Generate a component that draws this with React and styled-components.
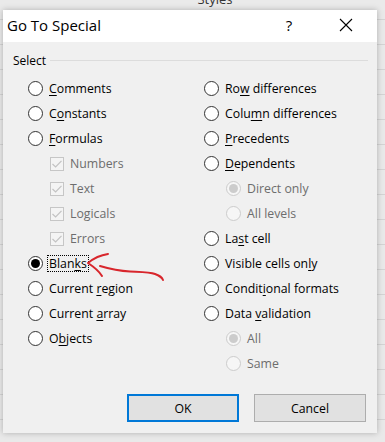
import React from "react"
import styled, { createGlobalStyle } from "styled-components"

const GlobalStyle = createGlobalStyle`
    html, body {
        margin: 0;
        padding: 0;
        background: #e6e6e6;
    }
    body {
        font-family: "Open Sans", "Noto Sans", sans-serif;
    }
`

const Backdrop = styled.div`
    width: 385px;
    height: 442px;
    overflow: hidden;
    background-color: #e9e9e9;
    background-image: repeating-linear-gradient(
        to bottom,
        transparent 0,
        transparent 24px,
        #d4d4d4 24px,
        #d4d4d4 25px
    );
    background-position: 0 -5px;
    display: flex;
    flex-direction: column;
`

const TopStrip = styled.div`
    height: 10px;
    overflow: hidden;
    display: flex;
    justify-content: center;
    background: #eaeaea;

    span {
        font-size: 13px;
        line-height: 13px;
        margin-top: -7px;
        padding-left: 45px;
        color: #333;
    }
`

const DialogRow = styled.div`
    display: flex;
    padding-left: 3px;
`

const Dialog = styled.div`
    position: relative;
    width: 374px;
    height: 423px;
    background: #f0f0f0;
    box-shadow: 0 0 6px rgba(0, 0, 0, 0.25);
    display: flex;
    flex-direction: column;
`

const TitleBar = styled.div`
    height: 32px;
    background: #fff;
    display: flex;
    align-items: center;
    padding-left: 4px;

    .Title {
        flex: 1;
        font-size: 15px;
        color: #000;
        margin-top: -2px;
    }

    .Help {
        width: 24px;
        text-align: center;
        font-size: 15px;
        margin-right: 37px;
        margin-top: -2px;
    }

    .Close {
        width: 16px;
        height: 16px;
        margin-right: 23px;
        margin-top: -3px;
    }
`

const Body = styled.div`
    flex: 1;
    display: flex;
    flex-direction: column;
    padding: 9px 9px 0 10px;
`

const GroupHeader = styled.div`
    display: flex;
    align-items: center;
    height: 18px;
    column-gap: 4px;
    font-size: 12px;

    &::after {
        content: "";
        flex: 1;
        height: 1px;
        background: #dcdcdc;
    }
`

const Columns = styled.div`
    display: grid;
    grid-template-columns: 176px 1fr;
    padding: 7px 0 0 15px;
`

const Column = styled.div`
    display: flex;
    flex-direction: column;
`

const OptionRow = styled.div`
    height: 25px;
    display: flex;
    align-items: center;
    column-gap: 5px;
    padding-left: ${props => props.$indent ? "22px" : "0"};
    font-size: 12.3px;
    color: ${props => props.$disabled ? "#6d6d6d" : "#000"};
`

const RadioMark = styled.span`
    width: 15px;
    height: 15px;
    box-sizing: border-box;
    border-radius: 50%;
    border: 1px solid ${props => props.$disabled ? "#cccccc" : "#333"};
    background: ${props => props.$disabled ? "#f6f6f6" : "#fff"};
    display: flex;
    align-items: center;
    justify-content: center;
    flex-shrink: 0;

    &::after {
        content: "";
        width: 9px;
        height: 9px;
        border-radius: 50%;
        background: ${props => props.$disabled ? "#cccccc" : "#000"};
        display: ${props => props.$checked ? "block" : "none"};
    }
`

const CheckMark = styled.span`
    width: 14px;
    height: 14px;
    box-sizing: border-box;
    border: 1px solid #c6c6c6;
    background: #f4f4f4;
    display: flex;
    align-items: center;
    justify-content: center;
    flex-shrink: 0;

    svg {
        width: 12px;
        height: 12px;
    }
`

const Label = styled.span`
    padding: 0 1px;
    line-height: 15px;
    outline: ${props => props.$focused ? "1px dotted #000" : "none"};
    white-space: nowrap;

    u {
        text-decoration: underline;
        text-underline-offset: 2px;
    }
`

const ButtonBar = styled.div`
    display: flex;
    justify-content: flex-end;
    column-gap: 15px;
    padding: 0 2px 11px 0;
`

const Button = styled.button`
    width: 112px;
    height: 28px;
    box-sizing: border-box;
    font-family: inherit;
    font-size: 12.3px;
    color: #000;
    background: #e1e1e1;
    border: ${props => props.$primary ? "2px solid #0078d7" : "1px solid #adadad"};
    padding: 0;
`

const Annotation = styled.svg`
    position: absolute;
    left: 77px;
    top: 240px;
    pointer-events: none;
`

const Option = ({ label, accel, type = "radio", checked, disabled, indent, focused }) => {
    const i = accel === undefined ? -1 : accel
    const text = i < 0 ? label : (
        <>
            {label.slice(0, i)}<u>{label[i]}</u>{label.slice(i + 1)}
        </>
    )
    return (
        <OptionRow $indent={indent} $disabled={disabled}>
            {type === "radio" ? (
                <RadioMark $checked={checked} $disabled={disabled}/>
            ) : (
                <CheckMark>
                    <svg viewBox="0 0 12 12">
                        <path d="M1.5 6 L4.6 9 L10.5 2.8" fill="none" stroke="#c2c2c2" strokeWidth="1.2"/>
                    </svg>
                </CheckMark>
            )}
            <Label $focused={focused}>{text}</Label>
        </OptionRow>
    )
}

const App = () => {
    return (
        <Backdrop>
            <GlobalStyle/>
            <TopStrip><span>Styles</span></TopStrip>
            <DialogRow>
                <Dialog>
                    <TitleBar>
                        <span className="Title">Go To Special</span>
                        <span className="Help">?</span>
                        <svg className="Close" viewBox="0 0 16 16">
                            <path d="M2 2 L14 14 M14 2 L2 14" stroke="#000" strokeWidth="1.1"/>
                        </svg>
                    </TitleBar>
                    <Body>
                        <GroupHeader>Select</GroupHeader>
                        <Columns>
                            <Column>
                                <Option label="Comments" accel={0}/>
                                <Option label="Constants" accel={1}/>
                                <Option label="Formulas" accel={0}/>
                                <Option label="Numbers" type="check" disabled indent/>
                                <Option label="Text" type="check" disabled indent/>
                                <Option label="Logicals" type="check" disabled indent/>
                                <Option label="Errors" type="check" disabled indent/>
                                <Option label="Blanks" accel={4} checked focused/>
                                <Option label="Current region" accel={8}/>
                                <Option label="Current array" accel={8}/>
                                <Option label="Objects" accel={1}/>
                            </Column>
                            <Column>
                                <Option label="Row differences" accel={2}/>
                                <Option label="Column differences" accel={4}/>
                                <Option label="Precedents" accel={0}/>
                                <Option label="Dependents" accel={0}/>
                                <Option label="Direct only" checked disabled indent/>
                                <Option label="All levels" disabled indent/>
                                <Option label="Last cell" accel={2}/>
                                <Option label="Visible cells only" accel={16}/>
                                <Option label="Conditional formats" accel={6}/>
                                <Option label="Data validation" accel={5}/>
                                <Option label="All" checked disabled indent/>
                                <Option label="Same" disabled indent/>
                            </Column>
                        </Columns>
                        <div style={{ flex: 1 }}/>
                        <ButtonBar>
                            <Button $primary>OK</Button>
                            <Button>Cancel</Button>
                        </ButtonBar>
                    </Body>
                    <Annotation width="90" height="35" viewBox="0 0 90 35">
                        <path
                            d="M20 16 C 30 19, 40 21, 50 21.5 C 60 22, 70 22, 75 24 C 80 26, 82 27, 83 30"
                            fill="none" stroke="#d8262c" strokeWidth="2" strokeLinecap="round"
                        />
                        <path
                            d="M28 4 C 21 5, 14 8, 8 13 C 14 17, 19 21, 22 26"
                            fill="none" stroke="#d8262c" strokeWidth="2" strokeLinecap="round" strokeLinejoin="round"
                        />
                    </Annotation>
                </Dialog>
            </DialogRow>
        </Backdrop>
    )
}

export default App
